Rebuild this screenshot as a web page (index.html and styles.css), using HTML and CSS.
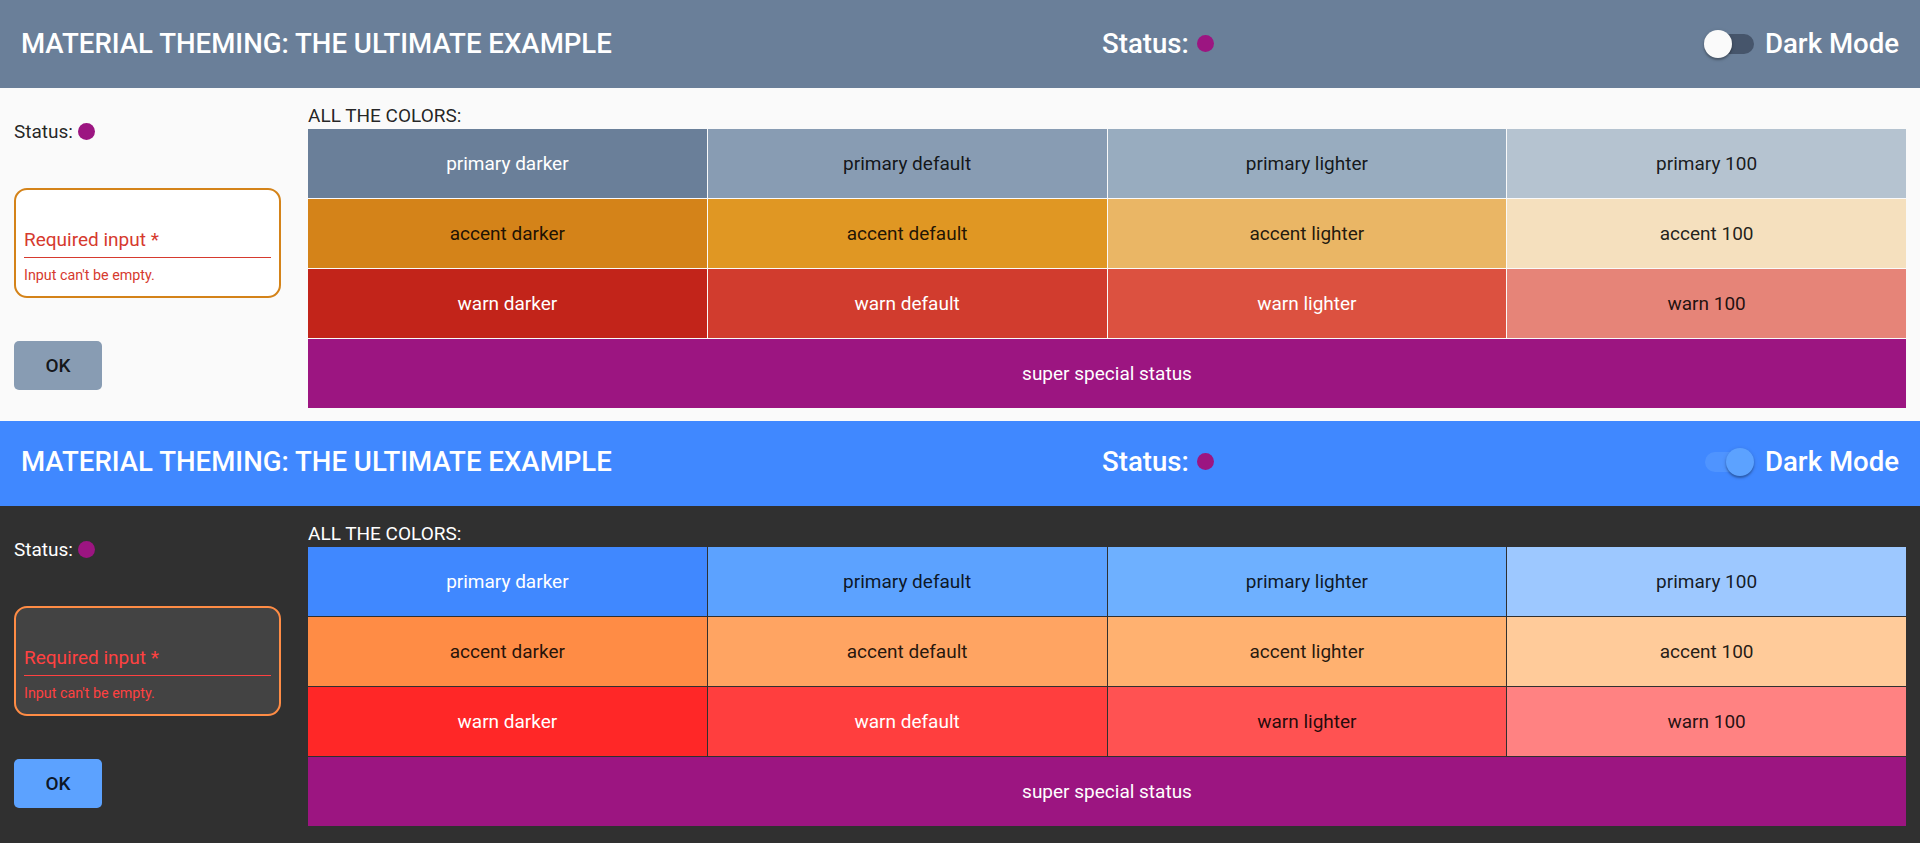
FILE: index.html
```html
<!DOCTYPE html>
<html lang="en">
<head>
    <meta charset="UTF-8">
    <title>Material Theming</title>
    <link rel="stylesheet" href="styles.css">
</head>
<body>
    <!-- light theme -->
    <div class="theme light">
        <header class="toolbar">
            <h1 class="title">MATERIAL THEMING: THE ULTIMATE EXAMPLE</h1>
            <div class="bar-status">Status: <span class="dot"></span></div>
            <label class="toggle">
                <span class="switch"><span class="track"></span><span class="thumb"></span></span>
                <span class="toggle-text">Dark Mode</span>
            </label>
        </header>
        <div class="content">
            <div class="side">
                <div class="status">Status: <span class="dot"></span></div>
                <div class="field">
                    <div class="field-label">Required input *</div>
                    <div class="field-error">Input can't be empty.</div>
                </div>
                <button class="ok">OK</button>
            </div>
            <div class="colors">
                <div class="colors-title">ALL THE COLORS:</div>
                <div class="swatches">
                    <div class="swatch p-darker white">primary darker</div>
                    <div class="swatch p-default">primary default</div>
                    <div class="swatch p-lighter">primary lighter</div>
                    <div class="swatch p-100">primary 100</div>
                    <div class="swatch a-darker">accent darker</div>
                    <div class="swatch a-default">accent default</div>
                    <div class="swatch a-lighter">accent lighter</div>
                    <div class="swatch a-100">accent 100</div>
                    <div class="swatch w-darker white">warn darker</div>
                    <div class="swatch w-default white">warn default</div>
                    <div class="swatch w-lighter white">warn lighter</div>
                    <div class="swatch w-100">warn 100</div>
                    <div class="swatch special white wide">super special status</div>
                </div>
            </div>
        </div>
    </div>

    <!-- dark theme -->
    <div class="theme dark">
        <header class="toolbar">
            <h1 class="title">MATERIAL THEMING: THE ULTIMATE EXAMPLE</h1>
            <div class="bar-status">Status: <span class="dot"></span></div>
            <label class="toggle checked">
                <span class="switch"><span class="track"></span><span class="thumb"></span></span>
                <span class="toggle-text">Dark Mode</span>
            </label>
        </header>
        <div class="content">
            <div class="side">
                <div class="status">Status: <span class="dot"></span></div>
                <div class="field">
                    <div class="field-label">Required input *</div>
                    <div class="field-error">Input can't be empty.</div>
                </div>
                <button class="ok">OK</button>
            </div>
            <div class="colors">
                <div class="colors-title">ALL THE COLORS:</div>
                <div class="swatches">
                    <div class="swatch p-darker white">primary darker</div>
                    <div class="swatch p-default">primary default</div>
                    <div class="swatch p-lighter">primary lighter</div>
                    <div class="swatch p-100">primary 100</div>
                    <div class="swatch a-darker">accent darker</div>
                    <div class="swatch a-default">accent default</div>
                    <div class="swatch a-lighter">accent lighter</div>
                    <div class="swatch a-100">accent 100</div>
                    <div class="swatch w-darker white">warn darker</div>
                    <div class="swatch w-default white">warn default</div>
                    <div class="swatch w-lighter">warn lighter</div>
                    <div class="swatch w-100">warn 100</div>
                    <div class="swatch special white wide">super special status</div>
                </div>
            </div>
        </div>
    </div>
</body>
</html>
```
FILE: styles.css
```css
* {
    margin: 0;
    padding: 0;
    box-sizing: border-box;
}
body {
    font-family: Roboto, "Noto Sans", sans-serif;
    background: #303030;
}

/* theme colors */
.light {
    --bg: #fafafa;
    --text: rgba(0, 0, 0, 0.87);
    --field-bg: #ffffff;
    --p-darker: #6a7f99;
    --p-default: #889cb3;
    --p-lighter: #98acbf;
    --p-100: #b5c3d0;
    --a-darker: #d48319;
    --a-default: #e09723;
    --a-lighter: #eab665;
    --a-100: #f5e0be;
    --w-darker: #c2241a;
    --w-default: #d13c2e;
    --w-lighter: #dc5140;
    --w-100: #e68478;
    --warn-text: #d63a2e;
    --track: #46556b;
    --thumb: #fafafa;
}
.dark {
    --bg: #303030;
    --text: #ffffff;
    --field-bg: #434343;
    --p-darker: #4088ff;
    --p-default: #5ca2ff;
    --p-lighter: #6eb0ff;
    --p-100: #9dc8ff;
    --a-darker: #ff8c45;
    --a-default: #ffa462;
    --a-lighter: #ffb170;
    --a-100: #ffcb9a;
    --w-darker: #ff2727;
    --w-default: #ff3e3e;
    --w-lighter: #ff5252;
    --w-100: #ff8282;
    --warn-text: #ff4141;
    --track: #5a9cff;
    --thumb: #5ca2ff;
}
.theme {
    background: var(--bg);
    color: var(--text);
}

/* toolbar */
.toolbar {
    height: 85px;
    display: flex;
    align-items: center;
    justify-content: space-between;
    padding: 0 21px 4px 21px;
    background: var(--p-darker);
    color: #ffffff;
    font-size: 27.6px;
    font-weight: 500;
}
.light .toolbar {
    height: 88px;
    border-top: 3px solid var(--p-darker);
}
.title {
    font-size: 27.6px;
    font-weight: 500;
}
.bar-status {
    display: flex;
    align-items: center;
    gap: 8px;
}
.dot {
    display: inline-block;
    width: 17px;
    height: 17px;
    border-radius: 50%;
    background: #9c1581;
}
.toggle {
    display: flex;
    align-items: center;
    gap: 11px;
}
.switch {
    position: relative;
    width: 50px;
    height: 28px;
}
.track {
    position: absolute;
    left: 1px;
    right: 0;
    top: 4px;
    height: 20px;
    border-radius: 10px;
    background: var(--track);
}
.thumb {
    position: absolute;
    left: 0;
    top: 0;
    width: 28px;
    height: 28px;
    border-radius: 50%;
    background: var(--thumb);
    box-shadow: 0 2px 2px rgba(0, 0, 0, 0.25), 0 1px 4px rgba(0, 0, 0, 0.15);
}
.checked .track {
    opacity: 0.6;
}
.checked .thumb {
    left: 22px;
}

/* content */
.content {
    display: flex;
    gap: 27px;
    padding: 14px 14px 13px;
}
.side {
    flex: none;
    width: 267px;
    padding-top: 16px;
}
.status {
    display: flex;
    align-items: center;
    font-size: 19px;
    line-height: 27px;
    gap: 5px;
}
.field {
    margin-top: 43px;
    height: 110px;
    border: 2px solid var(--a-darker);
    border-radius: 13px;
    background: var(--field-bg);
    padding: 36px 8px 0 8px;
    color: var(--warn-text);
}
.field-label {
    font-size: 19px;
    line-height: 27px;
    padding-bottom: 4px;
    border-bottom: 1px solid var(--warn-text);
}
.field-error {
    margin-top: 8px;
    font-size: 14.3px;
    line-height: 18px;
}
.ok {
    display: block;
    margin-top: 43px;
    width: 88px;
    height: 49px;
    border: none;
    border-radius: 5px;
    background: var(--p-default);
    color: rgba(0, 0, 0, 0.87);
    font-family: Roboto, sans-serif;
    font-size: 19px;
    font-weight: 500;
}
.colors {
    flex: 1;
}
.colors-title {
    font-size: 19px;
    line-height: 27px;
}
.swatches {
    display: grid;
    grid-template-columns: repeat(4, 1fr);
    grid-auto-rows: 69px;
    gap: 1px;
}
.swatch {
    display: flex;
    align-items: center;
    justify-content: center;
    font-size: 19px;
    color: rgba(0, 0, 0, 0.87);
}
.swatch.white {
    color: #ffffff;
}
.swatch.wide {
    grid-column: 1 / -1;
}
.p-darker { background: var(--p-darker); }
.p-default { background: var(--p-default); }
.p-lighter { background: var(--p-lighter); }
.p-100 { background: var(--p-100); }
.a-darker { background: var(--a-darker); }
.a-default { background: var(--a-default); }
.a-lighter { background: var(--a-lighter); }
.a-100 { background: var(--a-100); }
.w-darker { background: var(--w-darker); }
.w-default { background: var(--w-default); }
.w-lighter { background: var(--w-lighter); }
.w-100 { background: var(--w-100); }
.special { background: #9c1581; }
```
